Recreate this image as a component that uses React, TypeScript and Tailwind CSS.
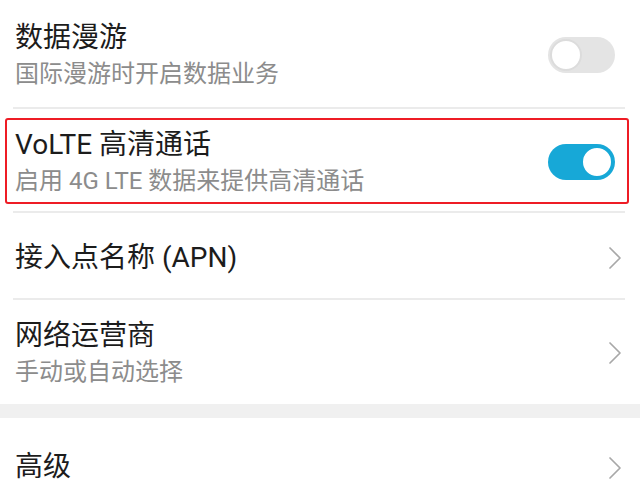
// 移动网络设置页：数据漫游 / VoLTE / APN / 运营商 / 高级
const font = "font-['Roboto','Noto_Sans_CJK_SC',sans-serif]"

function Toggle({ on }: { on: boolean }) {
  return (
    <div
      className={`w-[67px] h-[36px] rounded-full p-[2px] flex items-center ${
        on ? 'bg-[#17a8d7] justify-end' : 'bg-[#e4e4e4] justify-start'
      }`}
    >
      <div
        className={`w-[32px] h-[32px] rounded-full bg-white ${
          on ? 'border-[2px] border-[#17a8d7]' : 'border-[2px] border-[#dcdcdc]'
        }`}
      />
    </div>
  )
}

function Chevron() {
  return (
    <svg width="14" height="24" viewBox="0 0 14 24" fill="none" className="mr-[-7px]">
      <path d="M2 2 L12 12 L2 22" stroke="#a8a8a8" strokeWidth="1.7" strokeLinecap="round" strokeLinejoin="round" />
    </svg>
  )
}

function Divider() {
  return <div className="ml-[13px] mr-[15px] h-[2px] bg-[#ebebeb]" />
}

function Texts({ title, sub }: { title: string; sub?: string }) {
  return (
    <div className="flex flex-col">
      <div className="text-[28px] leading-[38px] text-[#1c1c1c]">{title}</div>
      {sub && <div className="text-[24px] leading-[34px] text-[#8c8c8c]">{sub}</div>}
    </div>
  )
}

export default function App() {
  return (
    <div className={`w-[640px] h-[481px] bg-white overflow-hidden ${font}`}>
      {/* 数据漫游 */}
      <div className="h-[107px] pl-[15px] pr-[25px] pt-[3px] flex items-center justify-between">
        <Texts title="数据漫游" sub="国际漫游时开启数据业务" />
        <Toggle on={false} />
      </div>
      <Divider />

      {/* VoLTE 高清通话 (红框标注) */}
      <div className="h-[102px] pl-[5px] pr-[11px] pt-[9px] pb-[7px]">
        <div className="h-full border-[2px] border-[#ee1c25] rounded-[3px] pl-[8px] pr-[12px] pt-[2px] flex items-center justify-between">
          <Texts title="VoLTE 高清通话" sub="启用 4G LTE 数据来提供高清通话" />
          <Toggle on={true} />
        </div>
      </div>
      <Divider />

      {/* 接入点名称 */}
      <div className="h-[85px] pl-[15px] pr-[25px] pt-[4px] flex items-center justify-between">
        <Texts title="接入点名称 (APN)" />
        <Chevron />
      </div>
      <Divider />

      {/* 网络运营商 */}
      <div className="h-[104px] pl-[15px] pr-[25px] pt-[2px] flex items-center justify-between">
        <Texts title="网络运营商" sub="手动或自动选择" />
        <Chevron />
      </div>

      <div className="h-[14px] bg-[#f0f0f0]" />

      {/* 高级 */}
      <div className="h-[62px] pl-[15px] pr-[25px] flex items-start justify-between">
        <div className="mt-[36px] text-[28px] leading-[26px] text-[#1c1c1c]">高级</div>
        <div className="mt-[38px]">
          <Chevron />
        </div>
      </div>
    </div>
  )
}
